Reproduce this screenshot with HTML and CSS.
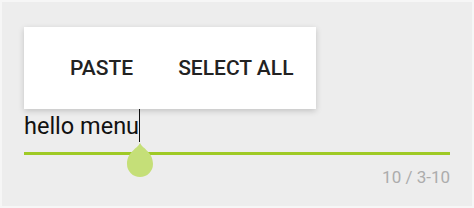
FILE: index.html
```html
<!DOCTYPE html>
<html lang="en">
<head>
    <meta charset="UTF-8">
    <title>Text field menu</title>
    <link rel="stylesheet" href="styles.css">
</head>
<body>
    <div class="screen">
        <!-- Popup menu -->
        <div class="menu">
            <span class="menu-item">PASTE</span>
            <span class="menu-item">SELECT ALL</span>
        </div>

        <!-- Text field -->
        <div class="field">
            <div class="input">hello menu<span class="cursor"></span></div>
            <svg class="handle" width="30" height="36" viewBox="0 0 30 36">
                <path d="M15 0 C18 6 28 9 28 21 A13 13 0 1 1 2 21 C2 9 12 6 15 0 Z" fill="#c5df78"/>
            </svg>
        </div>
        <div class="counter">10 / 3-10</div>
    </div>
</body>
</html>
```

FILE: styles.css
```css
body {
    margin: 0;
    background-color: #f6f6f6;
    font-family: Roboto, "Liberation Sans", sans-serif;
}
.screen {
    margin: 2px;
    height: 204px;
    width: 470px;
    background-color: #ededed;
    padding: 25px 0 0 22px;
    box-sizing: border-box;
}
.menu {
    width: 292px;
    height: 82px;
    background-color: #fff;
    box-shadow: 0 2px 6px rgba(0, 0, 0, 0.18);
    display: flex;
    align-items: center;
    gap: 45px;
    padding-left: 46px;
    box-sizing: border-box;
}
.menu-item {
    font-size: 21px;
    font-weight: 500;
    color: #222;
}
.field {
    position: relative;
    width: 426px;
    border-bottom: 3px solid #9fca25;
    height: 43px;
}
.input {
    font-size: 23.5px;
    color: #111;
    line-height: 26px;
    padding-top: 4px;
    display: flex;
}
.cursor {
    position: relative;
    width: 1px;
    height: 33px;
    margin-top: -4px;
    background-color: #111;
}
.handle {
    position: absolute;
    left: 101px;
    top: 34px;
}
.counter {
    width: 426px;
    text-align: right;
    font-size: 17px;
    color: #acacac;
    margin-top: 12px;
}
```
